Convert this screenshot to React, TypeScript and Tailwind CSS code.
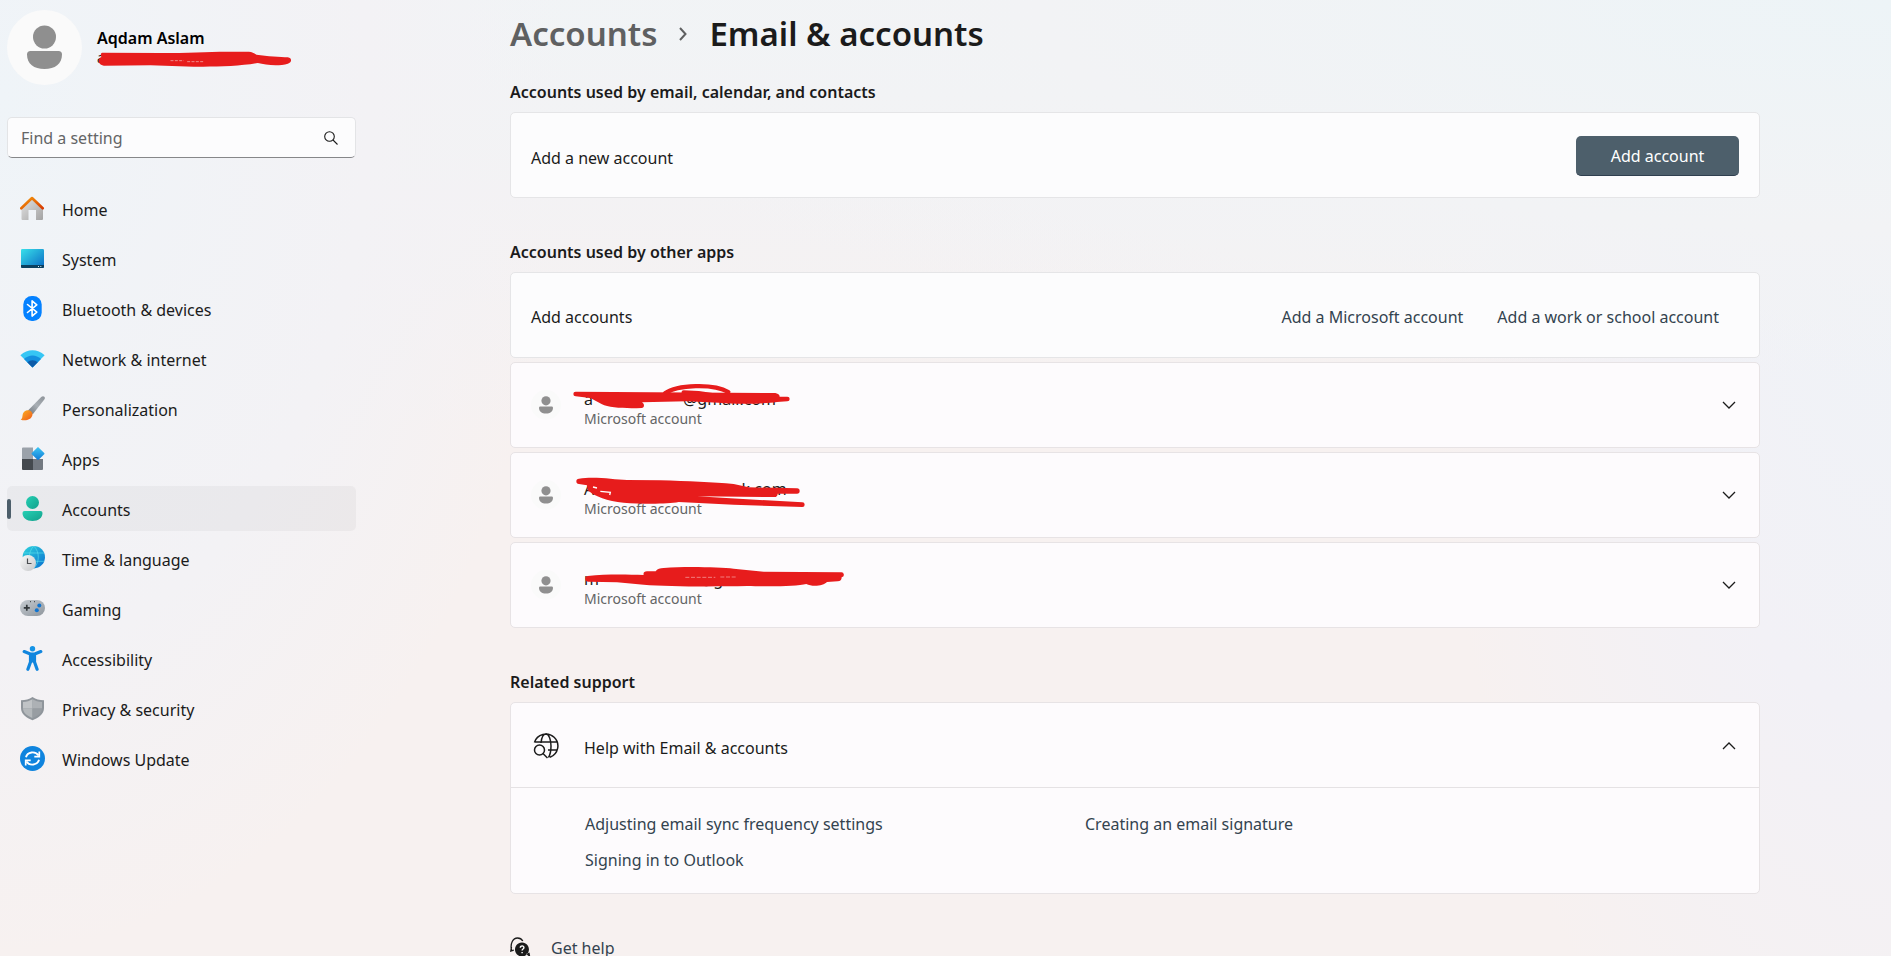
import React, { useState } from 'react';

interface INavItem {
    label: string;
    icon: React.ReactNode;
}

interface IAccount {
    start: string;
    end: string;
    gap: string;
    marker: React.ReactNode;
}

const HomeIcon = () => (
    <svg viewBox="0 0 25 25" className="size-[25px]">
        <defs>
            <linearGradient id="homeWall" x1="0" y1="0" x2="1" y2="1">
                <stop offset="0" stopColor="#e4e4e4" />
                <stop offset="1" stopColor="#a3a3a3" />
            </linearGradient>
            <linearGradient id="homeRoof" x1="0" y1="0" x2="1" y2="1">
                <stop offset="0" stopColor="#f59a0c" />
                <stop offset="1" stopColor="#d83b01" />
            </linearGradient>
        </defs>
        <path d="M1.500 12 12 2.500 23 12V23a1 1 0 0 1-1 1h-6V14H8.500v10H2.500a1 1 0 0 1-1-1Z" fill="url(#homeWall)" />
        <path d="M1.300 12.300 12 2l10.700 10.300" fill="none" stroke="url(#homeRoof)" strokeWidth="2.600" strokeLinecap="round" strokeLinejoin="round" />
    </svg>
);

const SystemIcon = () => (
    <svg viewBox="0 0 25 25" className="size-[25px]">
        <defs>
            <linearGradient id="screen" x1="0" y1="0" x2="1" y2="1">
                <stop offset="0" stopColor="#38e0ea" />
                <stop offset="1" stopColor="#0a6ac4" />
            </linearGradient>
        </defs>
        <rect x="1" y="3" width="23" height="19" rx="1.200" fill="url(#screen)" />
        <path d="M1 19h23v1.800a1.200 1.200 0 0 1-1.200 1.200H2.200A1.200 1.200 0 0 1 1 20.800Z" fill="#0b4060" />
        <path d="M18 20.500h1M20.300 20.500h1" stroke="#d5eef7" />
    </svg>
);

const BluetoothIcon = () => (
    <svg viewBox="0 0 25 25" className="size-[25px]">
        <rect x="3.300" y="0" width="18.400" height="25" rx="8.500" fill="#0481ff" />
        <path d="m7.500 8.500 9.300 7.600-4.700 4V4.900l4.700 4-9.300 7.600" fill="none" stroke="#fff" strokeWidth="1.600" strokeLinecap="round" strokeLinejoin="round" />
    </svg>
);

const NetworkIcon = () => (
    <svg viewBox="0 0 25 25" className="size-[25px]">
        <path d="M.4 9.300C7.500 2.500 17.500 2.500 24.600 9.300L12.500 21.500Z" fill="#36c6f4" />
        <path d="M4 13c5-4.800 12-4.800 17 0l-8.500 8.500Z" fill="#1490df" />
        <path d="M7.300 16.300c3-2.900 7.400-2.900 10.400 0l-5.200 5.200Z" fill="#0d5ba8" />
    </svg>
);

const BrushIcon = () => (
    <svg viewBox="0 0 25 25" className="size-[25px]">
        <defs>
            <linearGradient id="handle" x1="1" y1="0" x2="0" y2="1">
                <stop offset="0" stopColor="#8d9399" />
                <stop offset=".5" stopColor="#a9afb5" />
                <stop offset="1" stopColor="#6e757c" />
            </linearGradient>
            <linearGradient id="bristle" x1="0" y1="0" x2="1" y2="1">
                <stop offset="0" stopColor="#fcb322" />
                <stop offset="1" stopColor="#ee5a1c" />
            </linearGradient>
        </defs>
        <path d="M21.200 1C23.500-.8 26 1.300 24.300 3.500L12.800 18.300 8 14.500Z" fill="url(#handle)" />
        <path d="M7.500 14.200c3-.5 5.800 2.300 4.800 5.300C11.200 24 4.500 25.400.6 23.400c2.500-1 1.400-2.900 2.400-5.800.8-2.100 2.500-3.200 4.500-3.400Z" fill="url(#bristle)" />
    </svg>
);

const AppsIcon = () => (
    <svg viewBox="0 0 25 25" className="size-[25px]">
        <defs>
            <linearGradient id="diamond" x1="0" y1="0" x2="1" y2="1">
                <stop offset="0" stopColor="#3fc8f5" />
                <stop offset="1" stopColor="#0f78d4" />
            </linearGradient>
        </defs>
        <path d="M3 1.500h10V13H2V2.500a1 1 0 0 1 1-1Z" fill="#9ba2aa" />
        <path d="M2 13h11v11H3a1 1 0 0 1-1-1Z" fill="#44494e" />
        <path d="M13 13h10v10a1 1 0 0 1-1 1h-9Z" fill="#737981" />
        <rect x="13.200" y="2.800" width="9.600" height="9.600" rx=".8" transform="rotate(45 18 7.600)" fill="url(#diamond)" />
    </svg>
);

const AccountsIcon = () => (
    <svg viewBox="0 0 25 25" className="size-[25px]">
        <defs>
            <linearGradient id="person" x1="0" y1="0" x2="1" y2="1">
                <stop offset="0" stopColor="#25d0b4" />
                <stop offset="1" stopColor="#12a08b" />
            </linearGradient>
        </defs>
        <circle cx="12.500" cy="6.500" r="6.500" fill="url(#person)" />
        <path d="M4.500 15h16a2 2 0 0 1 2 2c0 4.800-4 8-10 8s-10-3.200-10-8a2 2 0 0 1 2-2Z" fill="url(#person)" />
    </svg>
);

const TimeIcon = () => (
    <svg viewBox="0 0 25 25" className="size-[25px]">
        <defs>
            <linearGradient id="globe" x1="0" y1="0" x2="1" y2="1">
                <stop offset="0" stopColor="#2fd5dd" />
                <stop offset="1" stopColor="#0a6fd0" />
            </linearGradient>
            <linearGradient id="clock" x1="0" y1="0" x2="1" y2="1">
                <stop offset="0" stopColor="#fafafa" />
                <stop offset="1" stopColor="#c4c6c8" />
            </linearGradient>
        </defs>
        <circle cx="13.800" cy="11.200" r="11.200" fill="url(#globe)" />
        <path d="M4 7h20M4 15.300h20M13.800 0c-6 6-6 16 0 22.400M13.800 0c6 6 6 16 0 22.400" fill="none" stroke="#5fe3ee" strokeOpacity=".6" />
        <circle cx="8" cy="17" r="8" fill="url(#clock)" />
        <path d="M7.500 12.500v5h4" fill="none" stroke="#4a4d50" strokeWidth="1.200" />
    </svg>
);

const GamingIcon = () => (
    <svg viewBox="0 0 25 25" className="size-[25px]">
        <defs>
            <linearGradient id="pad" x1="0" y1="0" x2="1" y2="1">
                <stop offset="0" stopColor="#c6ccd2" />
                <stop offset="1" stopColor="#8f969d" />
            </linearGradient>
        </defs>
        <rect x="0" y="4" width="25" height="16" rx="8" fill="url(#pad)" />
        <path d="M6.800 8.800v6M3.800 11.800h6" stroke="#33383c" strokeWidth="1.700" />
        <path d="M10 5.700h1M14 5.700h1" stroke="#33383c" />
        <circle cx="19.300" cy="9.500" r="2" fill="#0f74d1" />
        <circle cx="16.800" cy="14.300" r="2" fill="#0f74d1" />
    </svg>
);

const AccessibilityIcon = () => (
    <svg viewBox="0 0 25 25" className="size-[25px]">
        <circle cx="12.500" cy="2.700" r="2.700" fill="#1593e6" />
        <path d="M4.200 5.600 10.300 8h4.400l6.100-2.400M10.500 9v7l-2.600 7.300M14.500 9v7l2.600 7.300" fill="none" stroke="#1186de" strokeWidth="3.200" strokeLinecap="round" strokeLinejoin="round" />
        <path d="M9.500 7h6v9.500h-6Z" fill="#1186de" />
    </svg>
);

const PrivacyIcon = () => (
    <svg viewBox="0 0 25 25" className="size-[25px]">
        <path d="M12.500 1c3.300 2.300 7 3.200 11.500 3.200V12c0 6-5.500 10-11.500 12.200C6.500 22 1 18 1 12V4.200C5.500 4.200 9.200 3.300 12.500 1Z" fill="#8f959b" />
        <path d="M12.500 3.200V12.500H3V6c3.700-.2 6.800-1.200 9.500-2.800Z" fill="#c0c3c6" />
        <path d="M12.500 3.200c2.700 1.600 5.800 2.600 9.500 2.800v6.500h-9.500Z" fill="#adb1b5" />
        <path d="M3 12.500h9.500V22C7.500 20 3 17 3 12.500Z" fill="#b4b8bb" />
        <path d="M12.500 12.500H22c0 4.500-4.500 7.500-9.500 9.500Z" fill="#989da2" />
    </svg>
);

const UpdateIcon = () => (
    <svg viewBox="0 0 25 25" className="size-[25px]">
        <circle cx="12.500" cy="12.500" r="12.500" fill="#0f84de" />
        <path d="M6 11.300c1.200-5.500 9.300-6.800 12.600-1.800M19 13.700c-1.200 5.500-9.300 6.800-12.600 1.800" fill="none" stroke="#fff" strokeWidth="1.900" />
        <path d="M19.300 5.500v5.200h-5M5.700 19.500v-5.200h5" fill="none" stroke="#fff" strokeWidth="1.700" />
    </svg>
);

const navItems: INavItem[] = [
    { label: 'Home', icon: <HomeIcon /> },
    { label: 'System', icon: <SystemIcon /> },
    { label: 'Bluetooth & devices', icon: <BluetoothIcon /> },
    { label: 'Network & internet', icon: <NetworkIcon /> },
    { label: 'Personalization', icon: <BrushIcon /> },
    { label: 'Apps', icon: <AppsIcon /> },
    { label: 'Accounts', icon: <AccountsIcon /> },
    { label: 'Time & language', icon: <TimeIcon /> },
    { label: 'Gaming', icon: <GamingIcon /> },
    { label: 'Accessibility', icon: <AccessibilityIcon /> },
    { label: 'Privacy & security', icon: <PrivacyIcon /> },
    { label: 'Windows Update', icon: <UpdateIcon /> },
];

// red marker strokes over the addresses
const accounts: IAccount[] = [
    {
        start: 'a',
        end: '@gmail.com',
        gap: 'gap-[90px]',
        marker: (
            <svg viewBox="215 68 705 90" className="absolute -left-3 top-px w-[235px] h-[30px]">
                <path d="M226 97 825 101C835 103 838 108 838 112L861 112A7 7 0 0 1 861 126L830 128C790 134 700 135 655 130L560 126 425 129C434 134 432 146 424 146 380 148 325 146 305 135L270 116 226 111A7 7 0 0 1 226 97Z" fill="#e71c1c" />
                <path d="M494 102C530 76 640 72 684 98M550 99C590 99 620 104 640 108" fill="none" stroke="#e71c1c" strokeWidth="13" strokeLinecap="round" />
            </svg>
        ),
    },
    {
        start: 'A',
        end: '@outlook.com',
        gap: 'gap-[84px]',
        marker: (
            <svg viewBox="215 338 705 120" className="absolute -left-3 top-px w-[235px] h-[40px]">
                <path d="M236 358C280 350 340 360 380 362L480 363C560 366 640 368 700 374L745 384 890 387A8 8 0 0 1 890 403L832 403C832 410 828 413 822 413L590 411 906 429A7 7 0 0 1 906 443L700 436 535 428C500 435 420 434 370 430 320 426 285 412 262 393L260 378 236 374A8 8 0 0 1 236 358Z" fill="#e71c1c" />
                <path d="m278 383 12 3M300 396l30 3-2 8" fill="none" stroke="#fff" strokeWidth="4" />
            </svg>
        ),
    },
    {
        start: 'm',
        end: '@gmail.com',
        gap: 'gap-[100px]',
        marker: (
            <svg viewBox="215 608 825 90" className="absolute -left-3 top-px w-[275px] h-[30px]">
                <path d="M262 650C320 644 380 646 430 647 428 640 432 636 440 636L466 636C470 628 480 626 490 626 560 620 660 624 700 628L790 637 1022 639A7 7 0 0 1 1024 654C1024 662 1020 666 1012 666L980 668C970 680 935 683 918 674 890 682 800 682 740 680 640 682 500 682 430 676L350 669 265 667A8 8 0 0 1 262 650Z" fill="#e71c1c" />
                <path d="M555 654h90M660 653h50" stroke="#f7b0b0" strokeWidth="2" strokeDasharray="12 5" />
            </svg>
        ),
    },
];

const Avatar = ({ className }: { className: string }) => (
    <svg viewBox="0 0 75 75" className={className}>
        <circle cx="37.500" cy="37.500" r="37.500" fill="#fafafa" />
        <circle cx="37.500" cy="27" r="11.500" fill="#8f8f8f" />
        <path d="M23.500 41h28a3.500 3.500 0 0 1 3.500 3.500C55 54 48 59 37.500 59S20 54 20 44.500a3.500 3.500 0 0 1 3.500-3.500Z" fill="#8f8f8f" />
    </svg>
);

const Chevron = ({ up }: { up?: boolean }) => (
    <svg viewBox="0 0 16 16" className="size-4" fill="none" stroke="#1b1b1b" strokeWidth="1.300">
        <path d={up ? 'm2 11 6-6 6 6' : 'm2 5 6 6 6-6'} />
    </svg>
);

const App: React.FC = () => {

    const [active, setActive] = useState<string>('Accounts');
    const [search, setSearch] = useState<string>('');
    const [helpOpen, setHelpOpen] = useState<boolean>(true);

    return (
        <div className="flex h-screen overflow-hidden bg-[#f7f1f0] bg-[radial-gradient(ellipse_30%_90%_at_0%_10%,#eff4f8_0%,#f3f2f5_65%,transparent_100%),radial-gradient(ellipse_75%_40%_at_100%_0%,#edf4f7_0%,#f2f3f5_60%,transparent_100%),radial-gradient(ellipse_25%_110%_at_100%_20%,#eff3f7_0%,#f2f1f6_50%,transparent_100%),linear-gradient(to_bottom,#f1f4f6_0%,#f3f2f4_20%,transparent_45%)] font-['Noto_Sans','Open_Sans',sans-serif] text-base leading-5 text-[#1b1b1b]">
            <aside className="flex w-[379px] shrink-0 flex-col pl-[7px] pr-[23px] pt-[10px]">
                <div className="flex items-center gap-[15px]">
                    <Avatar className="size-[75px]" />
                    <div className="relative">
                        <p className="font-semibold text-black">Aqdam Aslam</p>
                        <p className="text-sm leading-5">a</p>
                        <svg viewBox="290 155 590 54" className="absolute left-0 top-[22px] h-[18px] w-[197px]">
                            <path d="M305 163 480 164C560 164 620 160 680 160L745 160C755 160 762 166 768 169 800 174 840 176 862 177 875 179 875 192 862 196 835 204 795 200 772 194 720 204 640 206 580 205L450 201 310 202C292 200 290 180 303 176 300 170 300 164 305 163Z" fill="#e71c1c" />
                            <path d="M510 187h40M560 190h50" stroke="#f4c0c0" strokeWidth="2" strokeDasharray="9 4" />
                        </svg>
                    </div>
                </div>

                <label className="mt-8 flex h-[41px] items-center rounded-[5px] border border-[#e3e4e6] border-b-[#868789] bg-[#fcfcfd] pl-[13px] pr-4">
                    <input
                        type="text"
                        aria-label="Find a setting"
                        placeholder="Find a setting"
                        value={search}
                        onChange={(e) => setSearch(e.target.value)}
                        className="min-w-0 flex-1 bg-transparent outline-none placeholder:text-[#646566]"
                    />
                    <svg viewBox="0 0 16 16" className="size-4" fill="none" stroke="#1b1b1b" strokeWidth="1.100">
                        <circle cx="6.500" cy="6.500" r="4.800" />
                        <path d="m10 10 4.500 4.500" />
                    </svg>
                </label>

                <nav className="mt-7 flex flex-col gap-[5px]">
                    {navItems.map((item) => (
                        <button
                            key={item.label}
                            type="button"
                            onClick={() => setActive(item.label)}
                            className={item.label === active
                                ? 'flex h-[45px] items-center rounded-[5px] bg-black/[0.035] text-left'
                                : 'flex h-[45px] items-center rounded-[5px] text-left hover:bg-black/[0.035]'}
                        >
                            <span className={item.label === active ? 'h-5 w-1 rounded-full bg-[#4d5f6b]' : 'h-5 w-1'}></span>
                            <span className="ml-[9px] mr-[17px]">{item.icon}</span>
                            <span className="pt-0.5">{item.label}</span>
                        </button>
                    ))}
                </nav>
            </aside>

            <main className="min-w-0 flex-1 overflow-y-auto [scrollbar-width:none]">
                <div className="mx-auto max-w-[1250px] pt-3">
                    <h1 className="flex items-center text-[33px] font-semibold leading-[44px]">
                        <a href="#accounts" className="text-[#5f6061]">Accounts</a>
                        <svg viewBox="0 0 16 16" className="mx-[18px] size-4" fill="none" stroke="#5f6061" strokeWidth="2">
                            <path d="m5 2 5.500 6L5 14" />
                        </svg>
                        <span>Email &amp; accounts</span>
                    </h1>

                    <h2 className="mt-[26px] font-semibold">Accounts used by email, calendar, and contacts</h2>
                    <div className="mt-[10px] flex h-[86px] items-center justify-between rounded-[5px] border border-[#e5e5e7] bg-[#fcfcfd] pl-5 pr-5 pt-0.5">
                        <span className="pt-1">Add a new account</span>
                        <button type="button" className="h-10 w-[163px] rounded-[5px] border-b border-[#2f3f4f] bg-[#4d5f6b] text-white">
                            Add account
                        </button>
                    </div>

                    <h2 className="mt-11 font-semibold">Accounts used by other apps</h2>
                    <div className="mt-[10px] flex flex-col gap-1">
                        <div className="flex h-[86px] items-center justify-between rounded-[5px] border border-[#e5e5e7] bg-[#fcfcfd] pl-5 pr-10">
                            <span className="pt-1">Add accounts</span>
                            <div className="flex gap-[34px] pt-1 text-[#33434f]">
                                <a href="#microsoft">Add a Microsoft account</a>
                                <a href="#work">Add a work or school account</a>
                            </div>
                        </div>
                        {accounts.map((account, i) => (
                            <button key={i} type="button" aria-label="Microsoft account" className="flex h-[86px] items-center rounded-[5px] border border-[#e7e3e5] bg-[#fdfbfd] pl-5 pr-[22px] text-left">
                                <Avatar className="size-[30px]" />
                                <span className="relative ml-[23px] flex flex-col pt-2">
                                    <span className={`flex ${account.gap}`}>
                                        <span>{account.start}</span>
                                        <span>{account.end}</span>
                                    </span>
                                    <span className="text-sm leading-5 text-[#646566]">Microsoft account</span>
                                    {account.marker}
                                </span>
                                <span className="ml-auto"><Chevron /></span>
                            </button>
                        ))}
                    </div>

                    <h2 className="mt-11 font-semibold">Related support</h2>
                    <section className="mt-[10px] rounded-[5px] border border-[#e7e3e5] bg-[#fdfbfd]">
                        <button
                            type="button"
                            onClick={() => setHelpOpen(!helpOpen)}
                            className="flex h-[85px] w-full items-center border-b border-[#e5e2e4] pl-[22px] pr-[22px] pt-0.5 text-left"
                        >
                            <svg viewBox="0 0 26 26" className="size-[26px]" fill="none" stroke="#1b1b1b" strokeWidth="1.500">
                                <path d="M1.400 9.500A12 12 0 1 1 17 24.300M2 9h22M15 17h9M8 10C8.500 5 10.500 1 13 1c3 0 5 6 5 12 0 5-1 9-2.500 11.500" />
                                <circle cx="6.500" cy="17" r="5" />
                                <path d="m10 20.500 4.500 4.500" />
                            </svg>
                            <span className="ml-[25px] pt-1">Help with Email &amp; accounts</span>
                            <span className="ml-auto"><Chevron up={helpOpen} /></span>
                        </button>
                        {helpOpen && (
                            <div className="grid grid-cols-[500px_1fr] gap-y-4 pb-[23px] pl-[74px] pt-[26px] text-[#33434f]">
                                <a href="#sync">Adjusting email sync frequency settings</a>
                                <a href="#signature">Creating an email signature</a>
                                <a href="#outlook">Signing in to Outlook</a>
                            </div>
                        )}
                    </section>

                    <a href="#help" className="mt-[43px] flex items-center gap-5 pb-10 text-[#33434f]">
                        <svg viewBox="0 0 21 21" className="size-[21px]">
                            <path d="M1.500 13.500C0 6 3 1 7.500 1c2.500 0 4.300 1.200 5.300 3M1.500 10 .8 14l3-.8" fill="none" stroke="#1b1b1b" strokeWidth="1.300" />
                            <path d="M12 5.500a7 7 0 1 1-.1 0M16 17l4.500 3.500-1-5" fill="#1b1b1b" />
                            <path d="M10.300 10.800c0-2.600 3.800-2.400 3.600 0-.1 1.300-1.800 1.300-1.800 2.800M12.100 15v1.200" fill="none" stroke="#fff" strokeWidth="1.400" />
                        </svg>
                        <span>Get help</span>
                    </a>
                </div>
            </main>
        </div>
    );
};

export default App;
